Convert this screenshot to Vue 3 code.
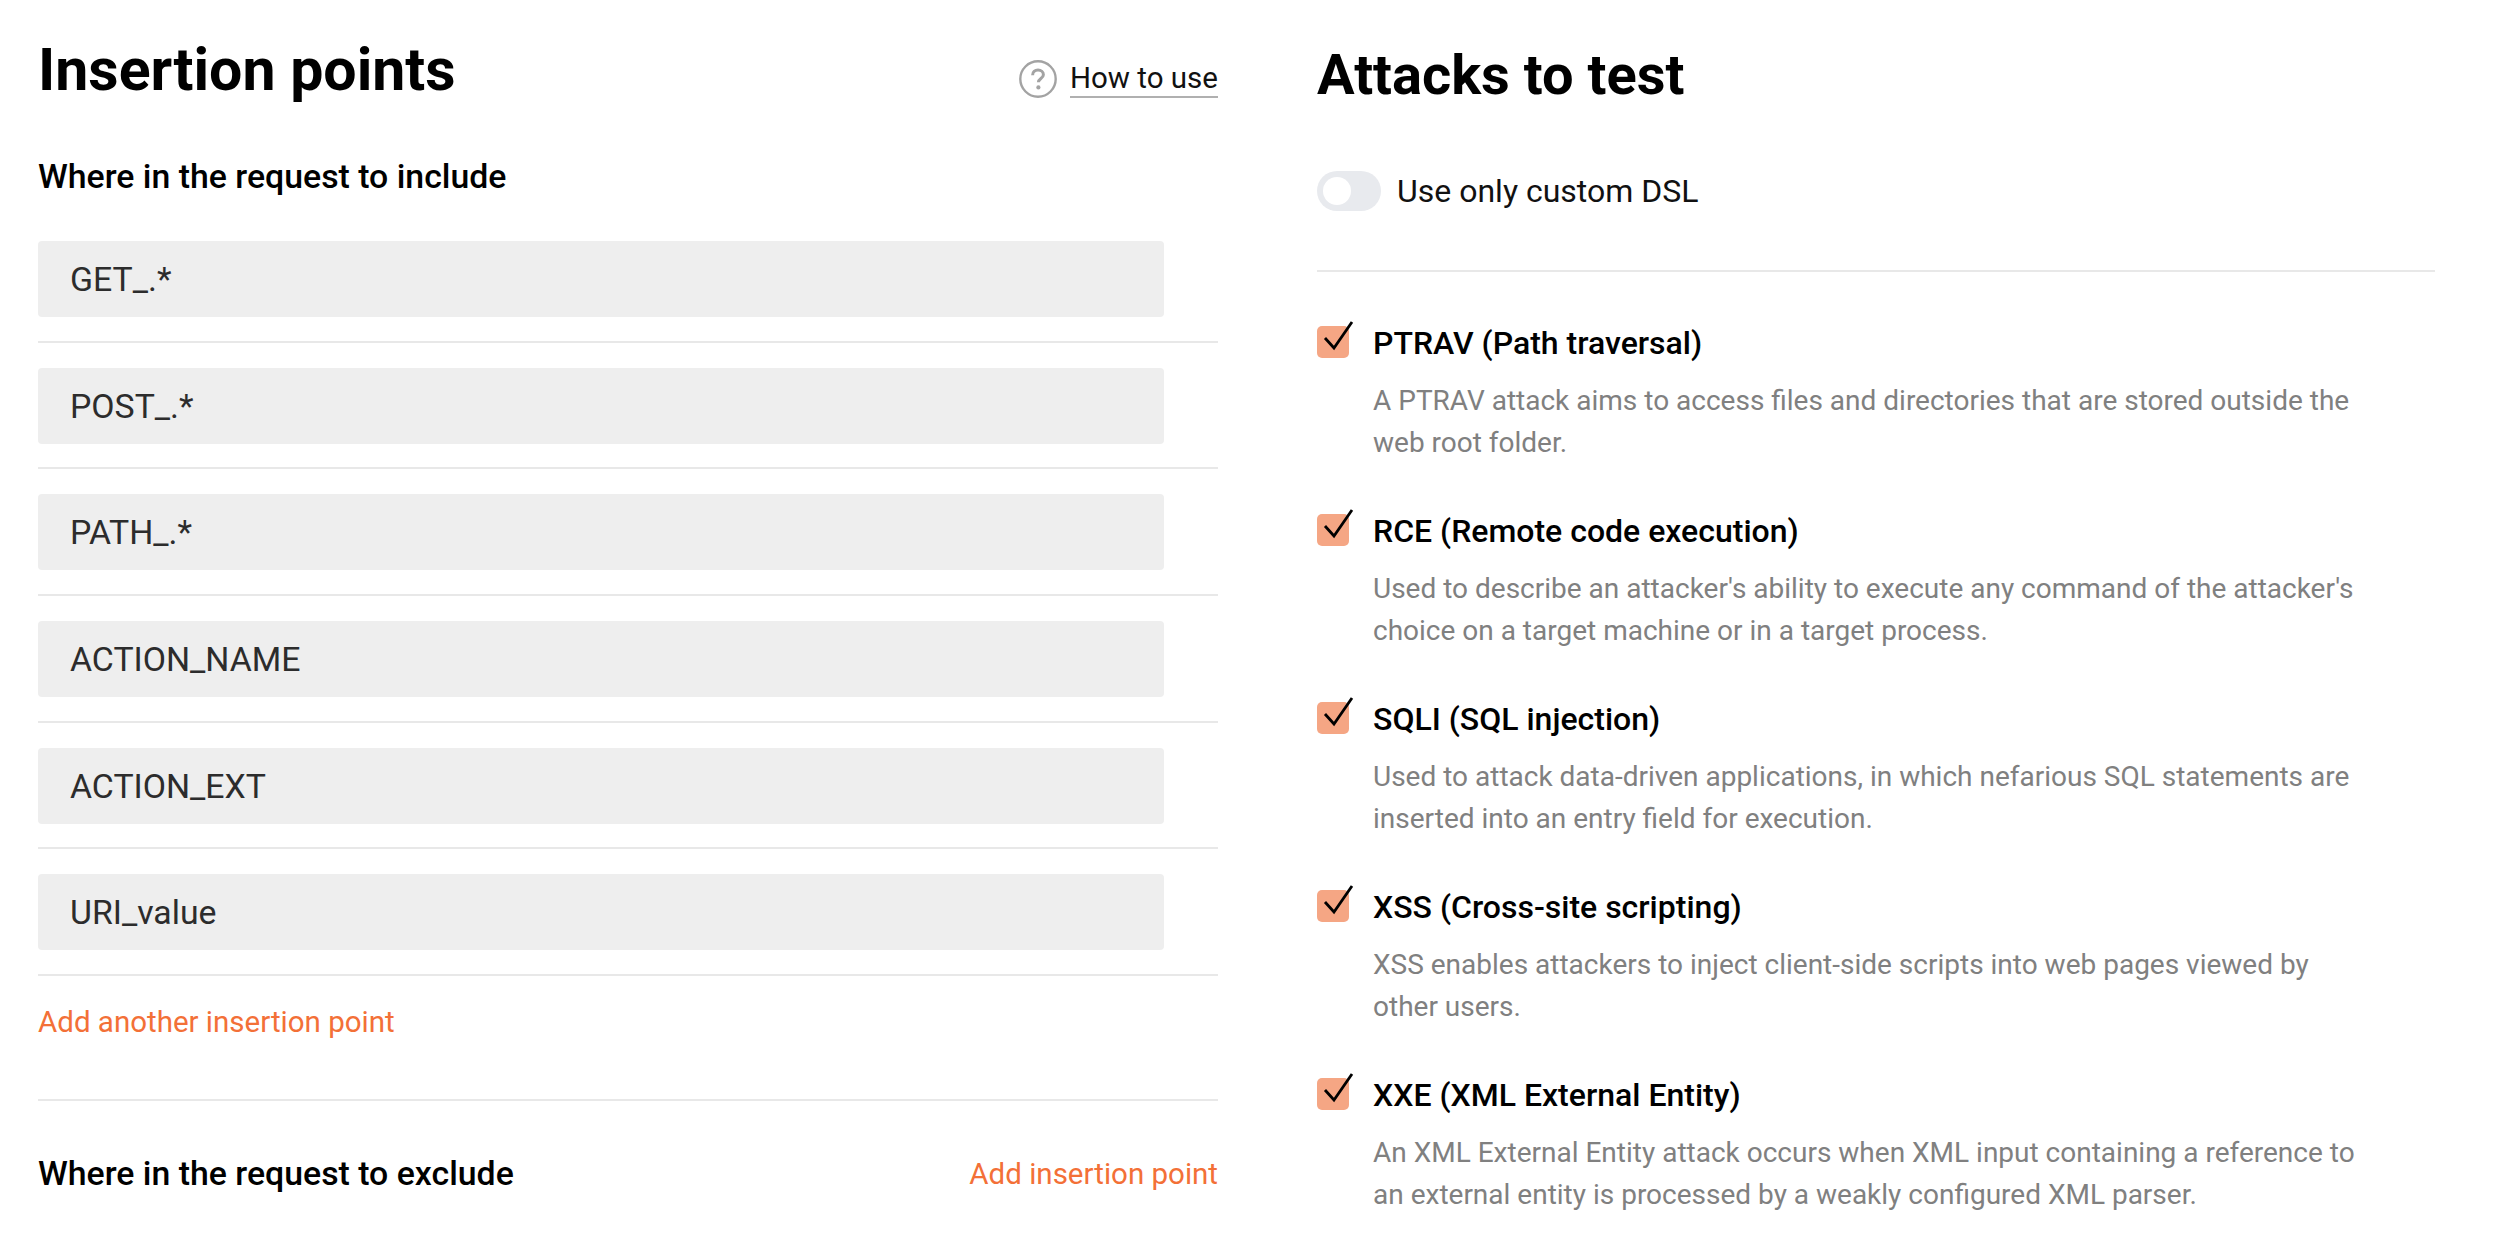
<script setup>
const fields = ['GET_.*', 'POST_.*', 'PATH_.*', 'ACTION_NAME', 'ACTION_EXT', 'URI_value']
const attacks = [
  { t: 'PTRAV (Path traversal)', d: ['A PTRAV attack aims to access files and directories that are stored outside the', 'web root folder.'] },
  { t: 'RCE (Remote code execution)', d: ["Used to describe an attacker's ability to execute any command of the attacker's", 'choice on a target machine or in a target process.'] },
  { t: 'SQLI (SQL injection)', d: ['Used to attack data-driven applications, in which nefarious SQL statements are', 'inserted into an entry field for execution.'] },
  { t: 'XSS (Cross-site scripting)', d: ['XSS enables attackers to inject client-side scripts into web pages viewed by', 'other users.'] },
  { t: 'XXE (XML External Entity)', d: ['An XML External Entity attack occurs when XML input containing a reference to', 'an external entity is processed by a weakly configured XML parser.'] },
]
</script>

<template>
  <div class="page">
    <section class="left">
      <header class="left-head">
        <h1 class="left-title">Insertion points</h1>
        <div class="how">
          <svg width="38" height="38" viewBox="0 0 38 38" class="q">
            <circle cx="19" cy="19" r="17.7" fill="none" stroke="#a3a3a3" stroke-width="2.4" />
            <path d="M13.6 15.2c0-3.2 2.3-5.1 5.4-5.1 3.1 0 5.4 1.9 5.4 4.6 0 3.8-5 3.8-5 7.6" fill="none" stroke="#a3a3a3" stroke-width="3" />
            <circle cx="19.4" cy="27.4" r="2.1" fill="#a3a3a3" />
          </svg>
          <span class="how-link">How to use</span>
        </div>
      </header>
      <h2 class="sub">Where in the request to include</h2>
      <div v-for="f in fields" :key="f" class="row">
        <div class="input">{{ f }}</div>
      </div>
      <div class="add-row"><span class="link">Add another insertion point</span></div>
      <div class="exclude">
        <h2>Where in the request to exclude</h2>
        <span class="link">Add insertion point</span>
      </div>
    </section>
    <section class="right">
      <h1 class="right-title">Attacks to test</h1>
      <div class="toggle-row">
        <span class="toggle"><span class="knob"></span></span>
        <span>Use only custom DSL</span>
      </div>
      <div class="attacks">
        <div v-for="a in attacks" :key="a.t" class="attack">
          <span class="check">
            <svg width="32" height="32" viewBox="0 0 32 32"><path d="M2 18l9 10L29 2" fill="none" stroke="#000" stroke-width="2.8" /></svg>
          </span>
          <div>
            <div class="attack-title">{{ a.t }}</div>
            <p v-for="l in a.d" :key="l">{{ l }}</p>
          </div>
        </div>
      </div>
    </section>
  </div>
</template>

<style>
html, body { background: #fff; overflow: hidden; }
</style>

<style scoped>
.page {
  display: grid;
  grid-template-columns: 1180px 1118px;
  column-gap: 99px;
  padding-left: 38px;
  width: 2497px;
  height: 1250px;
  box-sizing: border-box;
  overflow: hidden;
  font-family: Roboto, sans-serif;
  color: #000;
}
h1, h2, p { margin: 0; }
h1 { font-weight: 700; line-height: 70px; }
.left-title { font-size: 59px; }
.right-title { font-size: 56px; margin-top: 40px; }
.left-head {
  display: flex;
  justify-content: space-between;
  align-items: flex-end;
  padding-top: 35px;
  height: 70px;
}
.how { display: flex; align-items: center; gap: 13px; margin-bottom: 7px; }
.how-link {
  font-size: 29.5px;
  line-height: 35px;
  color: #111;
  border-bottom: 2px solid #b0b0b0;
}
h2 { font-size: 33.85px; font-weight: 500; line-height: 40px; }
.sub { margin-top: 52px; margin-bottom: 44px; }
.row {
  height: 99.67px;
  margin-bottom: 25px;
  border-bottom: 2px solid #e8e8e8;
}
.input {
  height: 76px;
  background: #eee;
  border-radius: 4px;
  width: 1126px;
  display: flex;
  align-items: center;
  padding: 1px 0 0 32px;
  box-sizing: border-box;
  font-size: 33.8px;
  color: #2c2c2c;
}
.add-row {
  height: 100px;
  margin-top: -2px;
  border-bottom: 2px solid #e8e8e8;
}
.link { font-size: 29.5px; line-height: 46px; color: #f37037; }
.exclude {
  display: flex;
  justify-content: space-between;
  align-items: center;
  margin-top: 50px;
}
.toggle-row {
  display: flex;
  align-items: center;
  gap: 16px;
  margin-top: 61px;
  padding-bottom: 59px;
  border-bottom: 2px solid #e8e8e8;
  font-size: 32px;
  line-height: 40px;
  color: #111;
}
.toggle {
  width: 64px;
  height: 40px;
  border-radius: 20px;
  background: #e8eaee;
  display: flex;
  align-items: center;
  padding-left: 6px;
  box-sizing: border-box;
}
.knob { width: 28px; height: 28px; border-radius: 50%; background: #fff; }
.attacks { margin-top: 48px; }
.attack {
  display: flex;
  gap: 24px;
  height: 188px;
  width: 1080px;
}
.check {
  position: relative;
  flex: none;
  width: 32px;
  height: 32px;
  margin-top: 6px;
  border-radius: 5px;
  background: #f5a684;
}
.check svg { position: absolute; left: 6px; top: -6px; }
.attack-title { font-size: 32px; font-weight: 500; line-height: 46px; margin-bottom: 14px; }
.attack p { font-size: 28px; line-height: 42px; color: #808080; white-space: nowrap; }
</style>
